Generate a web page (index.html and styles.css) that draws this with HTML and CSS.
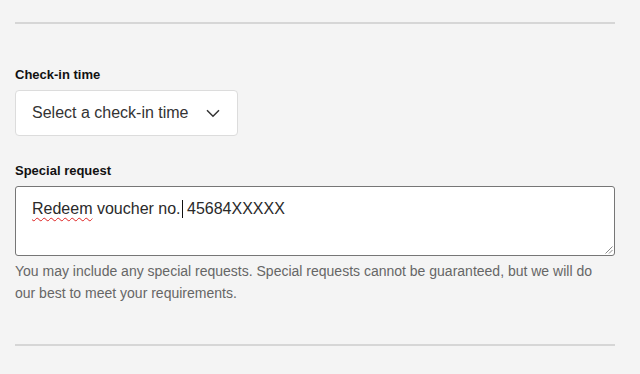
FILE: index.html
```html
<!DOCTYPE html>
<html lang="en">
<head>
<meta charset="utf-8">
<link rel="stylesheet" href="styles.css">
</head>
<body>
<div class="page">
  <hr class="rule">
  <div class="field field-first">
    <div class="label">Check-in time</div>
    <div class="select">
      <span class="select-text">Select a check-in time</span>
      <svg class="chev" width="14" height="9" viewBox="0 0 14 9"><path d="M1 1.2 L7 7.2 L13 1.2" fill="none" stroke="#333" stroke-width="1.5"/></svg>
    </div>
  </div>
  <div class="field field-second">
    <div class="label">Special request</div>
    <div class="textarea">
      <span class="spell">Redeem</span> voucher no.<span class="caret"></span> 45684XXXXX
      <svg class="grip" width="9" height="9" viewBox="0 0 9 9"><path d="M8.5 1.5 L1.5 8.5 M8.5 5 L5 8.5" stroke="#888" stroke-width="1"/></svg>
    </div>
    <p class="help">You may include any special requests. Special requests cannot be guaranteed, but we will do our best to meet your requirements.</p>
  </div>
  <hr class="rule rule-bottom">
</div>
</body>
</html>
```

FILE: styles.css
```css
html, body {
  margin: 0;
  padding: 0;
  background: #f4f4f4;
}
body {
  font-family: "Liberation Sans", Arial, sans-serif;
}
.page {
  width: 600px;
  margin-left: 15px;
  padding-top: 22px;
}
.rule {
  margin: 0;
  border: 0;
  height: 2px;
  background: #d6d6d6;
}
.field-first {
  margin-top: 43px;
}
.field-second {
  margin-top: 27px;
}
.label {
  font-size: 13px;
  font-weight: bold;
  line-height: 16px;
  color: #111;
  margin-bottom: 7px;
}
.select {
  box-sizing: border-box;
  width: 223px;
  height: 46px;
  background: #fff;
  border: 1px solid #dcdcdc;
  border-radius: 4px;
  display: flex;
  align-items: center;
  padding-left: 16px;
  padding-right: 16px;
  justify-content: space-between;
}
.select-text {
  font-size: 16px;
  color: #333;
}
.chev {
  margin-top: 1px;
  margin-right: 1px;
}
.textarea {
  position: relative;
  box-sizing: border-box;
  height: 70px;
  background: #fff;
  border: 1px solid #767676;
  border-radius: 3px;
  padding: 13px 16px;
  font-size: 16px;
  line-height: 18px;
  color: #2a2a2a;
}
.spell {
  text-decoration: underline wavy #d22;
  text-decoration-thickness: 1px;
  text-underline-offset: 3px;
}
.caret {
  display: inline-block;
  width: 1px;
  height: 18px;
  background: #111;
  vertical-align: -4px;
  margin-left: 1px;
}
.grip {
  position: absolute;
  right: 1px;
  bottom: 1px;
}
.help {
  margin: 4px 0 0;
  font-size: 14px;
  line-height: 22px;
  color: #666;
}
.rule-bottom {
  margin-top: 40px;
}
```
